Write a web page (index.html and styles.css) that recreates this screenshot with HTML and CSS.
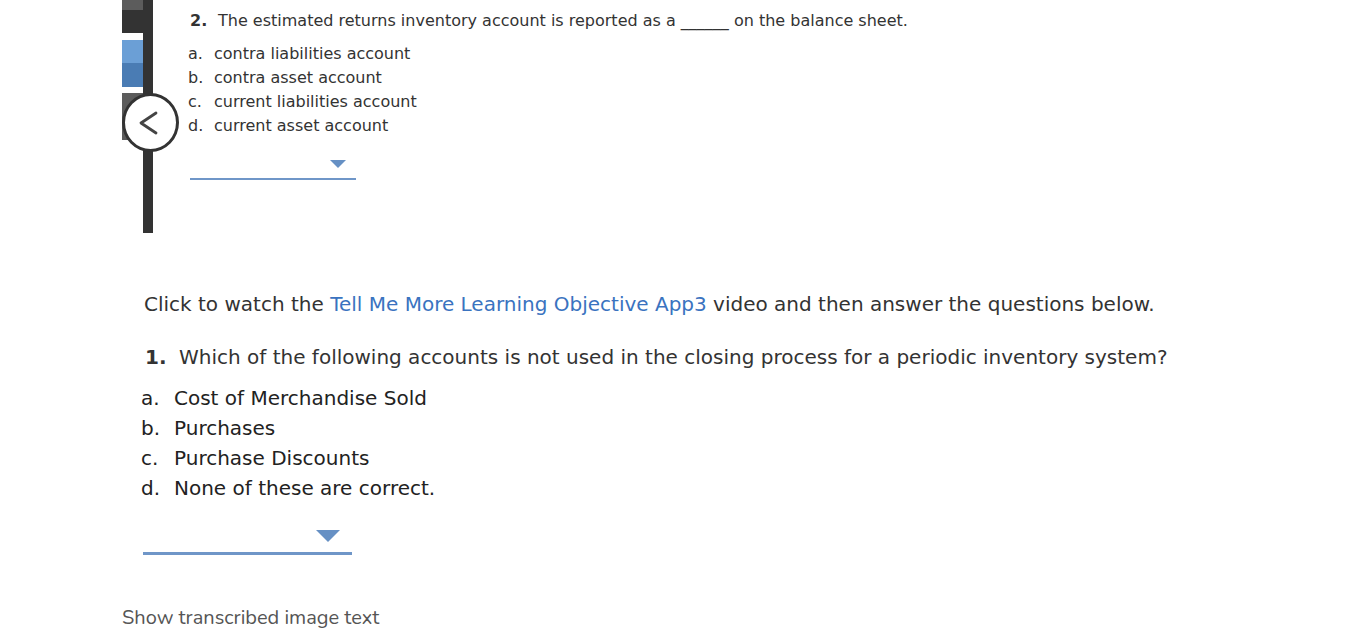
FILE: index.html
```html
<!DOCTYPE html>
<html>
<head>
<meta charset="utf-8">
<link rel="stylesheet" href="styles.css">
</head>
<body>
<div class="page">
  <section class="top">
    <div class="strip">
      <div class="thumbs">
        <div class="t t-gray"></div>
        <div class="t t-dark"></div>
        <div class="t t-gap"></div>
        <div class="t t-blue1"></div>
        <div class="t t-blue2"></div>
        <div class="t t-gap2"></div>
        <div class="t t-gray2"></div>
      </div>
      <div class="bar"></div>
      <div class="circle">
        <svg width="20" height="24" viewBox="0 0 20 24"><path d="M17 2 L2 12 L17 22" fill="none" stroke="#444" stroke-width="2.8" stroke-linecap="round" stroke-linejoin="round"/></svg>
      </div>
    </div>
    <div class="q1">
      <p class="qtext small"><b class="num">2.</b>The estimated returns inventory account is reported as a <span class="blank">______</span> on the balance sheet.</p>
      <ol class="opts small">
        <li><span class="l">a.</span>contra liabilities account</li>
        <li><span class="l">b.</span>contra asset account</li>
        <li><span class="l">c.</span>current liabilities account</li>
        <li><span class="l">d.</span>current asset account</li>
      </ol>
      <div class="select sel-small"><span class="tri"></span></div>
    </div>
  </section>

  <section class="q2">
    <p class="intro">Click to watch the <a class="link">Tell Me More Learning Objective App3</a> video and then answer the questions below.</p>
    <p class="qtext big"><b class="num">1.</b>Which of the following accounts is not used in the closing process for a periodic inventory system?</p>
    <ol class="opts big">
      <li><span class="l">a.</span>Cost of Merchandise Sold</li>
      <li><span class="l">b.</span>Purchases</li>
      <li><span class="l">c.</span>Purchase Discounts</li>
      <li><span class="l">d.</span>None of these are correct.</li>
    </ol>
    <div class="select sel-big"><span class="tri"></span></div>
  </section>

  <div class="show">Show transcribed image text</div>
</div>
</body>
</html>
```

FILE: styles.css
```css
html, body { margin: 0; padding: 0; background: #fff; }
body { font-family: "DejaVu Sans", Verdana, sans-serif; color: #333; overflow: hidden; }
.page { width: 1356px; height: 628px; }
p { margin: 0; }

/* top block with left filmstrip */
.top { display: flex; padding-left: 122px; height: 233px; }
.strip { display: flex; position: relative; width: 66px; flex: none; }
.thumbs { width: 21px; display: flex; flex-direction: column; }
.t-gray { height: 10px; background: #5c5c5c; }
.t-dark { height: 23px; background: #333; }
.t-gap { height: 7px; background: #fff; }
.t-blue1 { height: 23px; background: #6b9fd6; }
.t-blue2 { height: 24px; background: #4a7cb4; }
.t-gap2 { height: 6px; background: #fff; }
.t-gray2 { height: 47px; background: #5c5c5c; }
.bar { width: 10px; height: 233px; background: #333; }
.circle {
  position: absolute; left: 0; top: 93px; width: 51px; height: 53px;
  border: 3px solid #333; border-radius: 50%; background: #fff;
  display: flex; align-items: center; justify-content: center;
}
.circle svg { margin-left: -4px; }

.num { display: inline-block; font-weight: bold; }

.q1 { padding-top: 11px; }
.small { font-size: 16px; }
.q1 .qtext { margin-left: 2px; line-height: 20px; }
.q1 .num { width: 28px; }
.opts { list-style: none; margin: 0; padding: 0; }
.opts .l { display: inline-block; }
.opts.small { margin-top: 11px; line-height: 24px; }
.opts.small .l { width: 26px; }

.select { position: relative; }
.tri { position: absolute; width: 0; height: 0; border-left-style: solid; border-right-style: solid; border-top-style: solid; border-left-color: transparent; border-right-color: transparent; border-top-color: #6690c4; }
.sel-small { margin-left: 2px; margin-top: 22px; width: 166px; height: 18px; border-bottom: 2px solid #6f96c8; }
.sel-small .tri { right: 10px; top: 0; border-left-width: 8.5px; border-right-width: 8.5px; border-top-width: 8px; }

/* second question */
.q2 { padding-left: 141px; padding-top: 56px; }
.big { font-size: 20px; }
.intro { font-size: 20px; line-height: 30px; margin-left: 3px; }
.link { color: #3a73c0; text-decoration: none; }
.q2 .qtext { margin-top: 23px; margin-left: 4px; line-height: 30px; }
.q2 .num { width: 34px; }
.opts.big { margin-top: 11px; line-height: 30px; color: #222; }
.opts.big .l { width: 33px; }
.sel-big { margin-left: 2px; margin-top: 27px; width: 209px; height: 22px; border-bottom: 3px solid #6f96c8; }
.sel-big .tri { right: 12px; top: 0; border-left-width: 12.5px; border-right-width: 12.5px; border-top-width: 12px; }

.show { margin: 50px 0 0 122px; font-family: Nunito, Lato, sans-serif; font-size: 20px; line-height: 26px; color: #555; }
```
